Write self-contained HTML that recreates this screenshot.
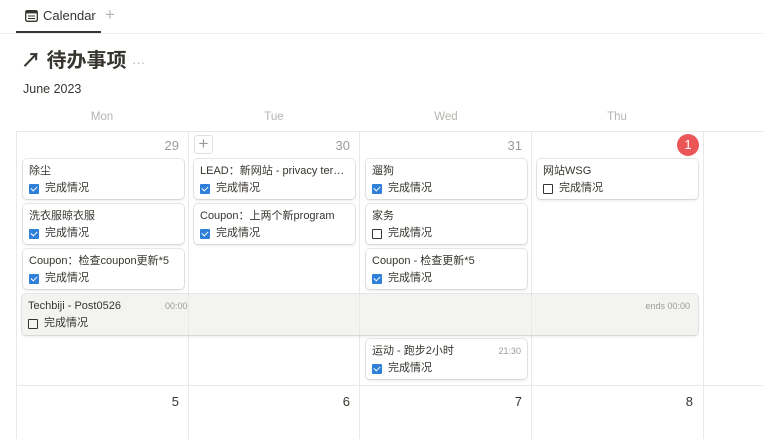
<!DOCTYPE html>
<html><head><meta charset="utf-8"><style>
*{box-sizing:border-box;margin:0;padding:0}
body{width:763px;height:439px;overflow:hidden;background:#fff;font-family:"Liberation Sans","Noto Sans CJK SC",sans-serif;color:#37352f;position:relative}
.a{position:absolute}
.vl{position:absolute;top:131px;bottom:0;width:1px;background:#e9e9e7}
.hl{position:absolute;left:16px;right:0;height:1px;background:#e9e9e7}
.dn{position:absolute;font-size:13px;color:#9b9a97;text-align:right;width:40px}
.card{position:absolute;background:#fff;border-radius:4px;box-shadow:0 0 0 1px rgba(15,15,15,.1),0 2px 3px rgba(15,15,15,.08);height:40px;width:161px;padding:4px 6px;font-size:11px;white-space:nowrap;overflow:hidden}
.t{height:17px;line-height:17px;overflow:hidden;text-overflow:ellipsis}
.p{height:17px;line-height:17px;display:flex;align-items:center;color:#37352f}
.cb{width:10px;height:10px;margin-right:6px;border-radius:1px;flex:none}
.on{background:#2f80d8;position:relative}
.on:after{content:"";position:absolute;left:3px;top:1px;width:3px;height:5px;border:solid #fff;border-width:0 1.3px 1.3px 0;transform:rotate(45deg)}
.off{border:1.2px solid #37352f}
.wd{position:absolute;top:111px;font-size:11.5px;color:#b4b4b0;width:100px;text-align:center}
</style></head><body>
<div class="a" style="left:16px;top:0;width:85px;height:33px;border-bottom:2px solid #37352f"></div>
<div class="hl" style="left:0;top:33px;background:#ededeb"></div>
<svg class="a" style="left:25px;top:10px" width="13" height="12" viewBox="0 0 13 12"><rect x="0.7" y="0.7" width="11.6" height="10.6" rx="1.5" fill="none" stroke="#37352f" stroke-width="1.3"/><rect x="1" y="1" width="11" height="2.4" fill="#37352f"/><path d="M3 6h7M3 8.5h7" stroke="#37352f" stroke-width="1"/></svg>
<div class="a" style="left:43px;top:8px;font-size:13px">Calendar</div>
<div class="a" style="left:105px;top:5px;font-size:17px;color:#b4b4b0;font-weight:300">+</div>
<div class="a" style="left:21px;top:44px;font-size:20px;font-weight:bold">↗ 待办事项 <span style="font-size:13px;color:#b4b4b0;font-weight:normal">···</span></div>
<div class="a" style="left:23px;top:82px;font-size:12.5px">June 2023</div>
<div class="wd" style="left:52px">Mon</div><div class="wd" style="left:224px">Tue</div><div class="wd" style="left:396px">Wed</div><div class="wd" style="left:567px">Thu</div>
<div class="hl" style="top:131px"></div>
<div class="hl" style="top:385px"></div>
<div class="vl" style="left:16px"></div><div class="vl" style="left:188px"></div><div class="vl" style="left:359px"></div><div class="vl" style="left:531px"></div><div class="vl" style="left:703px"></div>
<div class="dn" style="left:139px;top:138px">29</div>
<div class="dn" style="left:310px;top:138px">30</div>
<div class="dn" style="left:482px;top:138px">31</div>
<div class="a" style="left:677px;top:134px;width:22px;height:22px;border-radius:50%;background:#eb5757;color:#fff;font-size:13px;text-align:center;line-height:22px">1</div>
<div class="a" style="left:194px;top:135px;width:19px;height:19px;border:1px solid #e0e0de;border-radius:3px;color:#9b9a97;font-size:17px;line-height:16px;text-align:center">+</div>
<div class="dn" style="left:139px;top:394px;color:#37352f">5</div>
<div class="dn" style="left:310px;top:394px;color:#37352f">6</div>
<div class="dn" style="left:482px;top:394px;color:#37352f">7</div>
<div class="dn" style="left:653px;top:394px;color:#37352f">8</div>

<div class="card" style="left:23px;top:159px"><div class="t">除尘</div><div class="p"><span class="cb on"></span>完成情况</div></div>
<div class="card" style="left:23px;top:204px"><div class="t">洗衣服晾衣服</div><div class="p"><span class="cb on"></span>完成情况</div></div>
<div class="card" style="left:23px;top:249px"><div class="t">Coupon：检查coupon更新*5</div><div class="p"><span class="cb on"></span>完成情况</div></div>
<div class="card" style="left:194px;top:159px"><div class="t">LEAD：新网站 - privacy term...</div><div class="p"><span class="cb on"></span>完成情况</div></div>
<div class="card" style="left:194px;top:204px"><div class="t">Coupon：上两个新program</div><div class="p"><span class="cb on"></span>完成情况</div></div>
<div class="card" style="left:366px;top:159px"><div class="t">遛狗</div><div class="p"><span class="cb on"></span>完成情况</div></div>
<div class="card" style="left:366px;top:204px"><div class="t">家务</div><div class="p"><span class="cb off"></span>完成情况</div></div>
<div class="card" style="left:366px;top:249px"><div class="t">Coupon - 检查更新*5</div><div class="p"><span class="cb on"></span>完成情况</div></div>
<div class="card" style="left:537px;top:159px"><div class="t">网站WSG</div><div class="p"><span class="cb off"></span>完成情况</div></div>
<div class="card" style="left:22px;top:294px;width:676px;height:41px;background:rgba(235,235,233,.6)"><div class="t">Techbiji - Post0526<span style="position:absolute;left:143px;font-size:9px;color:#9b9a97">00:00</span><span style="position:absolute;right:8px;font-size:9px;color:#9b9a97">ends 00:00</span></div><div class="p"><span class="cb off"></span>完成情况</div></div>
<div class="card" style="left:366px;top:339px"><div class="t">运动 - 跑步2小时<span style="position:absolute;right:6px;font-size:9px;color:#9b9a97">21:30</span></div><div class="p"><span class="cb on"></span>完成情况</div></div>
</body></html>
